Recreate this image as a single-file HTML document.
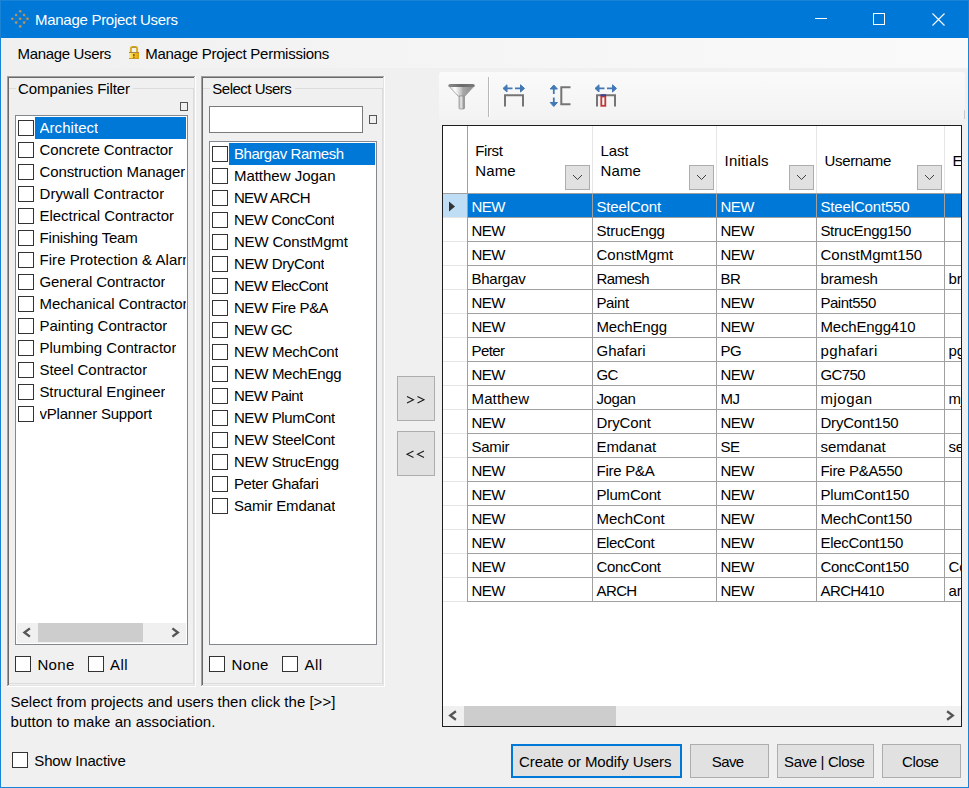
<!DOCTYPE html><html><head><meta charset="utf-8"><title>Manage Project Users</title><style>
*{box-sizing:border-box;margin:0;padding:0}
html,body{width:969px;height:788px;overflow:hidden;background:#F0F0F0}
body{position:relative;font-family:"Liberation Sans",sans-serif;font-size:15px;color:#000}
.a{position:absolute}
.t{position:absolute;white-space:pre;line-height:20px}
.it{position:absolute;white-space:pre;line-height:22px;height:22px;overflow:hidden}
.clip{position:absolute;overflow:hidden}
svg{position:absolute;overflow:visible}
</style></head><body>
<div class="a" style="left:0px;top:0px;width:969px;height:38px;background:#0078D7;"></div>
<div class="a" style="left:0px;top:0px;width:969px;height:1px;background:#1883D7;"></div>
<div class="a" style="left:0px;top:0px;width:1px;height:788px;background:#1883D7;"></div>
<div class="a" style="left:968px;top:0px;width:1px;height:788px;background:#1883D7;"></div>
<div class="a" style="left:0px;top:787px;width:969px;height:1px;background:#1883D7;"></div>
<svg style="left:0;top:0" width="40" height="38"><g stroke="#A08050" stroke-width="0.5" opacity="0.45" fill="none"><path d="M12.3 18.8H27.6M20.2 11.2L27.6 18.8L20.2 26.4M16.1 15L20.2 18.8L16.1 22.6M24.1 15L27.6 18.8L24.1 22.6"/></g><circle cx="20.2" cy="11.2" r="1.3" fill="#B8935D"/><circle cx="16.1" cy="15.0" r="1.3" fill="#B8935D"/><circle cx="24.1" cy="15.0" r="1.3" fill="#B8935D"/><circle cx="12.3" cy="18.8" r="1.3" fill="#B8935D"/><circle cx="20.2" cy="18.8" r="1.3" fill="#B8935D"/><circle cx="27.6" cy="18.8" r="1.3" fill="#B8935D"/><circle cx="16.1" cy="22.6" r="1.3" fill="#B8935D"/><circle cx="24.1" cy="22.6" r="1.3" fill="#B8935D"/><circle cx="20.2" cy="26.4" r="1.3" fill="#B8935D"/></svg>
<div class="t" style="left:35.0px;top:10px;letter-spacing:-0.28px;color:#FFFFFF;">Manage Project Users</div>
<div class="a" style="left:815px;top:18px;width:12px;height:1px;background:#FFFFFF;"></div>
<div class="a" style="left:873px;top:13px;width:12px;height:12px;border:1px solid #FFFFFF;background:transparent;"></div>
<svg style="left:0;top:0" width="969" height="38"><path d="M932.5 13.5L944.5 25.5M944.5 13.5L932.5 25.5" stroke="#fff" stroke-width="1.1"/></svg>
<div class="a" style="left:1px;top:38px;width:967px;height:30px;background:linear-gradient(to right,#F0F0F0,#FAFAFA)"></div>
<div class="t" style="left:17.6px;top:44px;letter-spacing:-0.35px;">Manage Users</div>
<svg style="left:124px;top:42px" width="20" height="20">
<defs><linearGradient id="lk" x1="0" x2="1"><stop offset="0" stop-color="#FFF08A"/><stop offset="0.5" stop-color="#F2C42A"/><stop offset="1" stop-color="#E0A000"/></linearGradient></defs>
<path d="M6.9 10.2V6.6Q6.9 5 8.4 5H11.6Q13.1 5 13.1 6.6V10.2" fill="none" stroke="#D9AE22" stroke-width="2"/>
<path d="M8.2 5.3H11.8" stroke="#A88650" stroke-width="1"/>
<rect x="5" y="10" width="10" height="7" fill="url(#lk)"/>
<rect x="5" y="10" width="10" height="1" fill="#A88650"/>
<rect x="5" y="16" width="10" height="1" fill="#C89A30"/>
<rect x="9.2" y="12" width="1.3" height="2.2" fill="#5A4A20"/>
<rect x="9.2" y="14.8" width="1.3" height="1" fill="#5A4A20"/>
</svg>
<div class="t" style="left:145.2px;top:44px;letter-spacing:-0.27px;">Manage Project Permissions</div>
<div class="a" style="left:7px;top:76px;width:189px;height:1px;background:#A0A0A0;"></div>
<div class="a" style="left:7px;top:76px;width:1px;height:611px;background:#A0A0A0;"></div>
<div class="a" style="left:7px;top:686px;width:189px;height:1px;background:#FFFFFF;"></div>
<div class="a" style="left:195px;top:76px;width:1px;height:611px;background:#FFFFFF;"></div>
<div class="a" style="left:8px;top:77px;width:187px;height:1px;background:#696969;"></div>
<div class="a" style="left:8px;top:77px;width:1px;height:609px;background:#696969;"></div>
<div class="a" style="left:8px;top:685px;width:187px;height:1px;background:#E3E3E3;"></div>
<div class="a" style="left:194px;top:77px;width:1px;height:609px;background:#E3E3E3;"></div>
<div class="a" style="left:9px;top:88px;width:185px;height:1px;background:#DCDCDC;"></div>
<div class="a" style="left:193px;top:88px;width:1px;height:596px;background:#DCDCDC;"></div>
<div class="a" style="left:9px;top:683px;width:185px;height:1px;background:#DCDCDC;"></div>
<div class="a" style="left:16px;top:80px;width:117px;height:17px;background:#F0F0F0;"></div>
<div class="t" style="left:18.1px;top:79px;letter-spacing:-0.09px;">Companies Filter</div>
<div class="a" style="left:180px;top:102px;width:8px;height:9px;border:1px solid #555555;background:#F0F0F0;"></div>
<div class="a" style="left:15px;top:115px;width:173px;height:530px;border:1px solid #828790;background:#FFFFFF;"></div>
<div class="clip" style="left:16px;top:116px;width:170px;height:507px">
<div class="a" style="left:2px;top:4px;width:16px;height:16px;border:1px solid #333;background:#fff"></div>
<div class="a" style="left:19px;top:1px;width:151px;height:22px;background:#0078D7"></div>
<div class="it" style="left:23.5px;top:1px;color:#fff;letter-spacing:0.05px;">Architect</div>
<div class="a" style="left:2px;top:26px;width:16px;height:16px;border:1px solid #333;background:#fff"></div>
<div class="it" style="left:23.5px;top:23px;letter-spacing:-0.08px;">Concrete Contractor</div>
<div class="a" style="left:2px;top:48px;width:16px;height:16px;border:1px solid #333;background:#fff"></div>
<div class="it" style="left:23.5px;top:45px;letter-spacing:-0.10px;">Construction Manager</div>
<div class="a" style="left:2px;top:70px;width:16px;height:16px;border:1px solid #333;background:#fff"></div>
<div class="it" style="left:23.5px;top:67px;letter-spacing:0.08px;">Drywall Contractor</div>
<div class="a" style="left:2px;top:92px;width:16px;height:16px;border:1px solid #333;background:#fff"></div>
<div class="it" style="left:23.5px;top:89px;letter-spacing:-0.03px;">Electrical Contractor</div>
<div class="a" style="left:2px;top:114px;width:16px;height:16px;border:1px solid #333;background:#fff"></div>
<div class="it" style="left:23.5px;top:111px;letter-spacing:-0.18px;">Finishing Team</div>
<div class="a" style="left:2px;top:136px;width:16px;height:16px;border:1px solid #333;background:#fff"></div>
<div class="it" style="left:23.5px;top:133px;letter-spacing:0.05px;">Fire Protection &amp; Alarm</div>
<div class="a" style="left:2px;top:158px;width:16px;height:16px;border:1px solid #333;background:#fff"></div>
<div class="it" style="left:23.5px;top:155px;letter-spacing:-0.09px;">General Contractor</div>
<div class="a" style="left:2px;top:180px;width:16px;height:16px;border:1px solid #333;background:#fff"></div>
<div class="it" style="left:23.5px;top:177px;letter-spacing:-0.10px;">Mechanical Contractor</div>
<div class="a" style="left:2px;top:202px;width:16px;height:16px;border:1px solid #333;background:#fff"></div>
<div class="it" style="left:23.5px;top:199px;letter-spacing:-0.03px;">Painting Contractor</div>
<div class="a" style="left:2px;top:224px;width:16px;height:16px;border:1px solid #333;background:#fff"></div>
<div class="it" style="left:23.5px;top:221px;letter-spacing:0.01px;">Plumbing Contractor</div>
<div class="a" style="left:2px;top:246px;width:16px;height:16px;border:1px solid #333;background:#fff"></div>
<div class="it" style="left:23.5px;top:243px;letter-spacing:-0.05px;">Steel Contractor</div>
<div class="a" style="left:2px;top:268px;width:16px;height:16px;border:1px solid #333;background:#fff"></div>
<div class="it" style="left:23.5px;top:265px;letter-spacing:-0.14px;">Structural Engineer</div>
<div class="a" style="left:2px;top:290px;width:16px;height:16px;border:1px solid #333;background:#fff"></div>
<div class="it" style="left:23.5px;top:287px;letter-spacing:-0.22px;">vPlanner Support</div>
</div>
<div class="a" style="left:17px;top:623px;width:169px;height:20px;background:#F0F0F0;"></div>
<div class="a" style="left:38px;top:623px;width:105px;height:19px;background:#CDCDCD;"></div>
<svg style="left:0;top:0" width="200" height="700"><path d="M29.9 628.3L24.4 632.5L29.9 636.7M172.4 628.3L177.9 632.5L172.4 636.7" fill="none" stroke="#555555" stroke-width="2.3"/></svg>
<div class="a" style="left:15px;top:656px;width:16px;height:16px;border:1px solid #333333;background:#FFFFFF;"></div>
<div class="t" style="left:37.4px;top:655px;letter-spacing:0.33px;">None</div>
<div class="a" style="left:88px;top:656px;width:16px;height:16px;border:1px solid #333333;background:#FFFFFF;"></div>
<div class="t" style="left:110.0px;top:655px;letter-spacing:0.50px;">All</div>
<div class="a" style="left:201px;top:76px;width:184px;height:1px;background:#A0A0A0;"></div>
<div class="a" style="left:201px;top:76px;width:1px;height:611px;background:#A0A0A0;"></div>
<div class="a" style="left:201px;top:686px;width:184px;height:1px;background:#FFFFFF;"></div>
<div class="a" style="left:384px;top:76px;width:1px;height:611px;background:#FFFFFF;"></div>
<div class="a" style="left:202px;top:77px;width:182px;height:1px;background:#696969;"></div>
<div class="a" style="left:202px;top:77px;width:1px;height:609px;background:#696969;"></div>
<div class="a" style="left:202px;top:685px;width:182px;height:1px;background:#E3E3E3;"></div>
<div class="a" style="left:383px;top:77px;width:1px;height:609px;background:#E3E3E3;"></div>
<div class="a" style="left:203px;top:88px;width:180px;height:1px;background:#DCDCDC;"></div>
<div class="a" style="left:382px;top:88px;width:1px;height:596px;background:#DCDCDC;"></div>
<div class="a" style="left:203px;top:683px;width:180px;height:1px;background:#DCDCDC;"></div>
<div class="a" style="left:210px;top:80px;width:85px;height:17px;background:#F0F0F0;"></div>
<div class="t" style="left:212.3px;top:79px;letter-spacing:-0.50px;">Select Users</div>
<div class="a" style="left:209px;top:106px;width:154px;height:27px;border:1px solid #7A7A7A;background:#FFFFFF;"></div>
<div class="a" style="left:369px;top:115px;width:8px;height:9px;border:1px solid #555555;background:#F0F0F0;"></div>
<div class="a" style="left:209px;top:141px;width:168px;height:504px;border:1px solid #828790;background:#FFFFFF;"></div>
<div class="a" style="left:212px;top:146px;width:16px;height:16px;border:1px solid #333333;background:#FFFFFF;"></div>
<div class="a" style="left:229px;top:143px;width:146px;height:22px;background:#0078D7;"></div>
<div class="it" style="left:233.9px;top:143px;color:#fff;letter-spacing:-0.43px;">Bhargav Ramesh</div>
<div class="a" style="left:212px;top:168px;width:16px;height:16px;border:1px solid #333333;background:#FFFFFF;"></div>
<div class="it" style="left:233.9px;top:165px;letter-spacing:-0.01px;">Matthew Jogan</div>
<div class="a" style="left:212px;top:190px;width:16px;height:16px;border:1px solid #333333;background:#FFFFFF;"></div>
<div class="it" style="left:233.9px;top:187px;letter-spacing:-0.60px;">NEW ARCH</div>
<div class="a" style="left:212px;top:212px;width:16px;height:16px;border:1px solid #333333;background:#FFFFFF;"></div>
<div class="it" style="left:233.9px;top:209px;letter-spacing:-0.45px;">NEW ConcCont</div>
<div class="a" style="left:212px;top:234px;width:16px;height:16px;border:1px solid #333333;background:#FFFFFF;"></div>
<div class="it" style="left:233.9px;top:231px;letter-spacing:-0.16px;">NEW ConstMgmt</div>
<div class="a" style="left:212px;top:256px;width:16px;height:16px;border:1px solid #333333;background:#FFFFFF;"></div>
<div class="it" style="left:233.9px;top:253px;letter-spacing:-0.34px;">NEW DryCont</div>
<div class="a" style="left:212px;top:278px;width:16px;height:16px;border:1px solid #333333;background:#FFFFFF;"></div>
<div class="it" style="left:233.9px;top:275px;letter-spacing:-0.48px;">NEW ElecCont</div>
<div class="a" style="left:212px;top:300px;width:16px;height:16px;border:1px solid #333333;background:#FFFFFF;"></div>
<div class="it" style="left:233.9px;top:297px;letter-spacing:-0.39px;">NEW Fire P&amp;A</div>
<div class="a" style="left:212px;top:322px;width:16px;height:16px;border:1px solid #333333;background:#FFFFFF;"></div>
<div class="it" style="left:233.9px;top:319px;letter-spacing:-0.60px;">NEW GC</div>
<div class="a" style="left:212px;top:344px;width:16px;height:16px;border:1px solid #333333;background:#FFFFFF;"></div>
<div class="it" style="left:233.9px;top:341px;letter-spacing:-0.26px;">NEW MechCont</div>
<div class="a" style="left:212px;top:366px;width:16px;height:16px;border:1px solid #333333;background:#FFFFFF;"></div>
<div class="it" style="left:233.9px;top:363px;letter-spacing:-0.29px;">NEW MechEngg</div>
<div class="a" style="left:212px;top:388px;width:16px;height:16px;border:1px solid #333333;background:#FFFFFF;"></div>
<div class="it" style="left:233.9px;top:385px;letter-spacing:-0.49px;">NEW Paint</div>
<div class="a" style="left:212px;top:410px;width:16px;height:16px;border:1px solid #333333;background:#FFFFFF;"></div>
<div class="it" style="left:233.9px;top:407px;letter-spacing:-0.35px;">NEW PlumCont</div>
<div class="a" style="left:212px;top:432px;width:16px;height:16px;border:1px solid #333333;background:#FFFFFF;"></div>
<div class="it" style="left:233.9px;top:429px;letter-spacing:-0.33px;">NEW SteelCont</div>
<div class="a" style="left:212px;top:454px;width:16px;height:16px;border:1px solid #333333;background:#FFFFFF;"></div>
<div class="it" style="left:233.9px;top:451px;letter-spacing:-0.34px;">NEW StrucEngg</div>
<div class="a" style="left:212px;top:476px;width:16px;height:16px;border:1px solid #333333;background:#FFFFFF;"></div>
<div class="it" style="left:233.9px;top:473px;letter-spacing:-0.36px;">Peter Ghafari</div>
<div class="a" style="left:212px;top:498px;width:16px;height:16px;border:1px solid #333333;background:#FFFFFF;"></div>
<div class="it" style="left:233.9px;top:495px;letter-spacing:-0.16px;">Samir Emdanat</div>
<div class="a" style="left:209px;top:656px;width:16px;height:16px;border:1px solid #333333;background:#FFFFFF;"></div>
<div class="t" style="left:231.6px;top:655px;letter-spacing:0.33px;">None</div>
<div class="a" style="left:282px;top:656px;width:16px;height:16px;border:1px solid #333333;background:#FFFFFF;"></div>
<div class="t" style="left:304.5px;top:655px;letter-spacing:0.50px;">All</div>
<div class="a" style="left:397px;top:376px;width:38px;height:45px;border:1px solid #ADADAD;background:#E1E1E1;"></div>
<div class="a" style="left:397px;top:431px;width:38px;height:45px;border:1px solid #ADADAD;background:#E1E1E1;"></div>
<svg style="left:0;top:0" width="969" height="788"><path d="M407 396.5L413.5 399.8L407 403.1M417.5 396.5L424 399.8L417.5 403.1M413.5 451L407 454.3L413.5 457.6M424 451L417.5 454.3L424 457.6" fill="none" stroke="#1a1a1a" stroke-width="1.1"/></svg>
<div class="t" style="left:10.5px;top:692px;letter-spacing:0.01px;">Select from projects and users then click the [&gt;&gt;]</div>
<div class="t" style="left:10.5px;top:712px;letter-spacing:0.05px;">button to make an association.</div>
<div class="a" style="left:12px;top:752px;width:16px;height:16px;border:1px solid #333333;background:#FFFFFF;"></div>
<div class="t" style="left:34.3px;top:751px;letter-spacing:-0.16px;">Show Inactive</div>
<div class="a" style="left:511px;top:744px;width:171px;height:34px;border:2px solid #0078D7;background:#E1E1E1"></div>
<div class="t" style="left:519.0px;top:752px;letter-spacing:-0.08px;">Create or Modify Users</div>
<div class="a" style="left:690px;top:744px;width:79px;height:34px;border:1px solid #ADADAD;background:#E1E1E1;"></div>
<div class="t" style="left:711.8px;top:752px;letter-spacing:-0.60px;">Save</div>
<div class="a" style="left:777px;top:744px;width:97px;height:34px;border:1px solid #ADADAD;background:#E1E1E1;"></div>
<div class="t" style="left:784.0px;top:752px;letter-spacing:-0.36px;">Save | Close</div>
<div class="a" style="left:882px;top:744px;width:79px;height:34px;border:1px solid #ADADAD;background:#E1E1E1;"></div>
<div class="t" style="left:902.0px;top:752px;letter-spacing:-0.35px;">Close</div>
<div class="a" style="left:439px;top:72px;width:526px;height:48px;border-radius:3px;background:linear-gradient(#FAFAFA,#F3F3F3)"></div>
<div class="a" style="left:964px;top:110px;width:1px;height:9px;background:#C8C8C8;"></div>
<svg style="left:440px;top:76px" width="40" height="40">
<defs><linearGradient id="fg" x1="0" x2="1"><stop offset="0" stop-color="#D8D8D8"/><stop offset="0.25" stop-color="#FDFDFD"/><stop offset="0.5" stop-color="#C0C0C0"/><stop offset="0.55" stop-color="#A8A8A8"/><stop offset="1" stop-color="#8A8A8A"/></linearGradient>
<linearGradient id="sg" x1="0" x2="1"><stop offset="0" stop-color="#B8B8B8"/><stop offset="0.4" stop-color="#E8E8E8"/><stop offset="1" stop-color="#7A7A7A"/></linearGradient>
<linearGradient id="rg" x1="0" x2="1"><stop offset="0" stop-color="#8A8A8A"/><stop offset="0.5" stop-color="#6A6A6A"/><stop offset="1" stop-color="#7A7A7A"/></linearGradient></defs>
<path d="M8.8 10L34.2 10L24.8 20.2H18.2Z" fill="url(#fg)" stroke="#9A9A9A" stroke-width="0.8"/>
<rect x="8.4" y="8" width="26.3" height="3" rx="1.5" fill="url(#rg)"/>
<path d="M19 20H24.5V32Q24.5 33 23.5 33H20Q19 33 19 32Z" fill="url(#sg)" stroke="#8E8E8E" stroke-width="0.7"/>
</svg>
<div class="a" style="left:488px;top:77px;width:1px;height:40px;background:#B8B8B8;"></div>
<div class="a" style="left:489px;top:77px;width:1px;height:40px;background:#FFFFFF;"></div>
<svg style="left:0;top:0" width="969" height="130"><path d="M505.5 88.4H512.5M515.0 88.4H522.0" stroke="#4279B5" stroke-width="1.8"/><path d="M503.0 88.4L507.0 84.8L507.0 92.0Z" fill="#4279B5" stroke="#4279B5" stroke-width="1" stroke-linejoin="round"/><path d="M524.5 88.4L520.5 84.8L520.5 92.0Z" fill="#4279B5" stroke="#4279B5" stroke-width="1" stroke-linejoin="round"/><path d="M505 106.5V95.2H523V106.5" fill="none" stroke="#757575" stroke-width="2"/><path d="M553.8 88V94M553.8 97.4V103.5" stroke="#4279B5" stroke-width="1.8"/><path d="M553.8 85L557.4 89H550.2ZM553.8 106.5L557.4 102.5H550.2Z" fill="#4279B5" stroke="#4279B5" stroke-width="1" stroke-linejoin="round"/><path d="M570.5 87.2H561.3V104.3H570.5" fill="none" stroke="#757575" stroke-width="2"/><path d="M597.5 88.4H604.5M607.0 88.4H614.0" stroke="#4279B5" stroke-width="1.8"/><path d="M595.0 88.4L599.0 84.8L599.0 92.0Z" fill="#4279B5" stroke="#4279B5" stroke-width="1" stroke-linejoin="round"/><path d="M616.5 88.4L612.5 84.8L612.5 92.0Z" fill="#4279B5" stroke="#4279B5" stroke-width="1" stroke-linejoin="round"/><path d="M597 106.5V95.2H615V106.5" fill="none" stroke="#757575" stroke-width="2"/><rect x="601.3" y="96.5" width="4" height="9.3" fill="none" stroke="#C03838" stroke-width="1.8"/><rect x="600.5" y="94.2" width="5.6" height="2" fill="#40409A"/></svg>
<div class="a" style="left:442px;top:125px;width:520px;height:602px;border:1px solid #1E1E1E;background:#FFFFFF;"></div>
<div class="clip" style="left:443px;top:126px;width:518px;height:580px">
<div class="a" style="left:0px;top:0px;width:519px;height:67px;background:#FFFFFF"></div>
<div class="a" style="left:0px;top:67px;width:519px;height:1px;background:#A0A0A0"></div>
<div class="a" style="left:24px;top:0px;width:1px;height:68px;background:#A0A0A0"></div>
<div class="a" style="left:149px;top:0px;width:1px;height:67px;background:#E5E5E5"></div>
<div class="a" style="left:273px;top:0px;width:1px;height:67px;background:#E5E5E5"></div>
<div class="a" style="left:373px;top:0px;width:1px;height:67px;background:#E5E5E5"></div>
<div class="a" style="left:501px;top:0px;width:1px;height:67px;background:#E5E5E5"></div>
<div class="t" style="left:32.3px;top:15px;letter-spacing:-0.40px;">First</div>
<div class="t" style="left:32.3px;top:35px;letter-spacing:0.10px;">Name</div>
<div class="t" style="left:157.6px;top:15px;letter-spacing:-0.2px;">Last</div>
<div class="t" style="left:157.6px;top:35px;letter-spacing:0.10px;">Name</div>
<div class="t" style="left:281.5px;top:25px;letter-spacing:0.21px;">Initials</div>
<div class="t" style="left:381.5px;top:25px;letter-spacing:-0.34px;">Username</div>
<div class="t" style="left:509.5px;top:25px;letter-spacing:-0.2px;">Email</div>
<div class="a" style="left:122px;top:39px;width:25px;height:25px;background:#E1E1E1;border:1px solid #ADADAD"></div>
<svg style="left:122px;top:39px" width="25" height="25"><path d="M8 10L12.5 14.5L17 10" fill="none" stroke="#404040" stroke-width="1"/></svg>
<div class="a" style="left:246px;top:39px;width:25px;height:25px;background:#E1E1E1;border:1px solid #ADADAD"></div>
<svg style="left:246px;top:39px" width="25" height="25"><path d="M8 10L12.5 14.5L17 10" fill="none" stroke="#404040" stroke-width="1"/></svg>
<div class="a" style="left:346px;top:39px;width:25px;height:25px;background:#E1E1E1;border:1px solid #ADADAD"></div>
<svg style="left:346px;top:39px" width="25" height="25"><path d="M8 10L12.5 14.5L17 10" fill="none" stroke="#404040" stroke-width="1"/></svg>
<div class="a" style="left:474px;top:39px;width:25px;height:25px;background:#E1E1E1;border:1px solid #ADADAD"></div>
<svg style="left:474px;top:39px" width="25" height="25"><path d="M8 10L12.5 14.5L17 10" fill="none" stroke="#404040" stroke-width="1"/></svg>
<div class="a" style="left:0px;top:68px;width:24px;height:23px;background:#BFDDF5"></div>
<div class="a" style="left:25px;top:68px;width:494px;height:23px;background:#0078D7"></div>
<div class="a" style="left:0px;top:91px;width:24px;height:1px;background:#E5E5E5"></div>
<div class="a" style="left:24px;top:91px;width:495px;height:1px;background:#A0A0A0"></div>
<div class="a" style="left:24px;top:68px;width:1px;height:24px;background:#A0A0A0"></div>
<div class="a" style="left:149px;top:68px;width:1px;height:24px;background:#A0A0A0"></div>
<div class="a" style="left:273px;top:68px;width:1px;height:24px;background:#A0A0A0"></div>
<div class="a" style="left:373px;top:68px;width:1px;height:24px;background:#A0A0A0"></div>
<div class="a" style="left:501px;top:68px;width:1px;height:24px;background:#A0A0A0"></div>
<div class="t" style="left:28.5px;top:71px;letter-spacing:-0.60px;color:#FFFFFF;">NEW</div>
<div class="t" style="left:153.5px;top:71px;letter-spacing:-0.16px;color:#FFFFFF;">SteelCont</div>
<div class="t" style="left:277.5px;top:71px;letter-spacing:-0.60px;color:#FFFFFF;">NEW</div>
<div class="t" style="left:377.5px;top:71px;letter-spacing:-0.16px;color:#FFFFFF;">SteelCont550</div>
<div class="a" style="left:0px;top:115px;width:24px;height:1px;background:#E5E5E5"></div>
<div class="a" style="left:24px;top:115px;width:495px;height:1px;background:#A0A0A0"></div>
<div class="a" style="left:24px;top:92px;width:1px;height:24px;background:#A0A0A0"></div>
<div class="a" style="left:149px;top:92px;width:1px;height:24px;background:#A0A0A0"></div>
<div class="a" style="left:273px;top:92px;width:1px;height:24px;background:#A0A0A0"></div>
<div class="a" style="left:373px;top:92px;width:1px;height:24px;background:#A0A0A0"></div>
<div class="a" style="left:501px;top:92px;width:1px;height:24px;background:#A0A0A0"></div>
<div class="t" style="left:28.5px;top:95px;letter-spacing:-0.60px;">NEW</div>
<div class="t" style="left:153.5px;top:95px;letter-spacing:-0.21px;">StrucEngg</div>
<div class="t" style="left:277.5px;top:95px;letter-spacing:-0.60px;">NEW</div>
<div class="t" style="left:377.5px;top:95px;letter-spacing:-0.38px;">StrucEngg150</div>
<div class="a" style="left:0px;top:139px;width:24px;height:1px;background:#E5E5E5"></div>
<div class="a" style="left:24px;top:139px;width:495px;height:1px;background:#A0A0A0"></div>
<div class="a" style="left:24px;top:116px;width:1px;height:24px;background:#A0A0A0"></div>
<div class="a" style="left:149px;top:116px;width:1px;height:24px;background:#A0A0A0"></div>
<div class="a" style="left:273px;top:116px;width:1px;height:24px;background:#A0A0A0"></div>
<div class="a" style="left:373px;top:116px;width:1px;height:24px;background:#A0A0A0"></div>
<div class="a" style="left:501px;top:116px;width:1px;height:24px;background:#A0A0A0"></div>
<div class="t" style="left:28.5px;top:119px;letter-spacing:-0.60px;">NEW</div>
<div class="t" style="left:153.5px;top:119px;letter-spacing:0.01px;">ConstMgmt</div>
<div class="t" style="left:277.5px;top:119px;letter-spacing:-0.60px;">NEW</div>
<div class="t" style="left:377.5px;top:119px;letter-spacing:0.00px;">ConstMgmt150</div>
<div class="a" style="left:0px;top:163px;width:24px;height:1px;background:#E5E5E5"></div>
<div class="a" style="left:24px;top:163px;width:495px;height:1px;background:#A0A0A0"></div>
<div class="a" style="left:24px;top:140px;width:1px;height:24px;background:#A0A0A0"></div>
<div class="a" style="left:149px;top:140px;width:1px;height:24px;background:#A0A0A0"></div>
<div class="a" style="left:273px;top:140px;width:1px;height:24px;background:#A0A0A0"></div>
<div class="a" style="left:373px;top:140px;width:1px;height:24px;background:#A0A0A0"></div>
<div class="a" style="left:501px;top:140px;width:1px;height:24px;background:#A0A0A0"></div>
<div class="t" style="left:28.5px;top:143px;letter-spacing:-0.27px;">Bhargav</div>
<div class="t" style="left:153.5px;top:143px;letter-spacing:-0.54px;">Ramesh</div>
<div class="t" style="left:277.5px;top:143px;letter-spacing:-0.60px;">BR</div>
<div class="t" style="left:377.5px;top:143px;letter-spacing:-0.17px;">bramesh</div>
<div class="t" style="left:505.5px;top:143px;letter-spacing:-0.2px;">bramesh@</div>
<div class="a" style="left:0px;top:187px;width:24px;height:1px;background:#E5E5E5"></div>
<div class="a" style="left:24px;top:187px;width:495px;height:1px;background:#A0A0A0"></div>
<div class="a" style="left:24px;top:164px;width:1px;height:24px;background:#A0A0A0"></div>
<div class="a" style="left:149px;top:164px;width:1px;height:24px;background:#A0A0A0"></div>
<div class="a" style="left:273px;top:164px;width:1px;height:24px;background:#A0A0A0"></div>
<div class="a" style="left:373px;top:164px;width:1px;height:24px;background:#A0A0A0"></div>
<div class="a" style="left:501px;top:164px;width:1px;height:24px;background:#A0A0A0"></div>
<div class="t" style="left:28.5px;top:167px;letter-spacing:-0.60px;">NEW</div>
<div class="t" style="left:153.5px;top:167px;letter-spacing:-0.40px;">Paint</div>
<div class="t" style="left:277.5px;top:167px;letter-spacing:-0.60px;">NEW</div>
<div class="t" style="left:377.5px;top:167px;letter-spacing:-0.49px;">Paint550</div>
<div class="a" style="left:0px;top:211px;width:24px;height:1px;background:#E5E5E5"></div>
<div class="a" style="left:24px;top:211px;width:495px;height:1px;background:#A0A0A0"></div>
<div class="a" style="left:24px;top:188px;width:1px;height:24px;background:#A0A0A0"></div>
<div class="a" style="left:149px;top:188px;width:1px;height:24px;background:#A0A0A0"></div>
<div class="a" style="left:273px;top:188px;width:1px;height:24px;background:#A0A0A0"></div>
<div class="a" style="left:373px;top:188px;width:1px;height:24px;background:#A0A0A0"></div>
<div class="a" style="left:501px;top:188px;width:1px;height:24px;background:#A0A0A0"></div>
<div class="t" style="left:28.5px;top:191px;letter-spacing:-0.60px;">NEW</div>
<div class="t" style="left:153.5px;top:191px;letter-spacing:-0.17px;">MechEngg</div>
<div class="t" style="left:277.5px;top:191px;letter-spacing:-0.60px;">NEW</div>
<div class="t" style="left:377.5px;top:191px;letter-spacing:-0.17px;">MechEngg410</div>
<div class="a" style="left:0px;top:235px;width:24px;height:1px;background:#E5E5E5"></div>
<div class="a" style="left:24px;top:235px;width:495px;height:1px;background:#A0A0A0"></div>
<div class="a" style="left:24px;top:212px;width:1px;height:24px;background:#A0A0A0"></div>
<div class="a" style="left:149px;top:212px;width:1px;height:24px;background:#A0A0A0"></div>
<div class="a" style="left:273px;top:212px;width:1px;height:24px;background:#A0A0A0"></div>
<div class="a" style="left:373px;top:212px;width:1px;height:24px;background:#A0A0A0"></div>
<div class="a" style="left:501px;top:212px;width:1px;height:24px;background:#A0A0A0"></div>
<div class="t" style="left:28.5px;top:215px;letter-spacing:-0.60px;">Peter</div>
<div class="t" style="left:153.5px;top:215px;letter-spacing:-0.02px;">Ghafari</div>
<div class="t" style="left:277.5px;top:215px;letter-spacing:-0.60px;">PG</div>
<div class="t" style="left:377.5px;top:215px;letter-spacing:0.37px;">pghafari</div>
<div class="t" style="left:505.5px;top:215px;letter-spacing:-0.2px;">pghafari@</div>
<div class="a" style="left:0px;top:259px;width:24px;height:1px;background:#E5E5E5"></div>
<div class="a" style="left:24px;top:259px;width:495px;height:1px;background:#A0A0A0"></div>
<div class="a" style="left:24px;top:236px;width:1px;height:24px;background:#A0A0A0"></div>
<div class="a" style="left:149px;top:236px;width:1px;height:24px;background:#A0A0A0"></div>
<div class="a" style="left:273px;top:236px;width:1px;height:24px;background:#A0A0A0"></div>
<div class="a" style="left:373px;top:236px;width:1px;height:24px;background:#A0A0A0"></div>
<div class="a" style="left:501px;top:236px;width:1px;height:24px;background:#A0A0A0"></div>
<div class="t" style="left:28.5px;top:239px;letter-spacing:-0.60px;">NEW</div>
<div class="t" style="left:153.5px;top:239px;letter-spacing:-0.60px;">GC</div>
<div class="t" style="left:277.5px;top:239px;letter-spacing:-0.60px;">NEW</div>
<div class="t" style="left:377.5px;top:239px;letter-spacing:-0.60px;">GC750</div>
<div class="a" style="left:0px;top:283px;width:24px;height:1px;background:#E5E5E5"></div>
<div class="a" style="left:24px;top:283px;width:495px;height:1px;background:#A0A0A0"></div>
<div class="a" style="left:24px;top:260px;width:1px;height:24px;background:#A0A0A0"></div>
<div class="a" style="left:149px;top:260px;width:1px;height:24px;background:#A0A0A0"></div>
<div class="a" style="left:273px;top:260px;width:1px;height:24px;background:#A0A0A0"></div>
<div class="a" style="left:373px;top:260px;width:1px;height:24px;background:#A0A0A0"></div>
<div class="a" style="left:501px;top:260px;width:1px;height:24px;background:#A0A0A0"></div>
<div class="t" style="left:28.5px;top:263px;letter-spacing:0.13px;">Matthew</div>
<div class="t" style="left:153.5px;top:263px;letter-spacing:-0.40px;">Jogan</div>
<div class="t" style="left:277.5px;top:263px;letter-spacing:-0.60px;">MJ</div>
<div class="t" style="left:377.5px;top:263px;letter-spacing:0.50px;">mjogan</div>
<div class="t" style="left:505.5px;top:263px;letter-spacing:-0.2px;">mjogan@</div>
<div class="a" style="left:0px;top:307px;width:24px;height:1px;background:#E5E5E5"></div>
<div class="a" style="left:24px;top:307px;width:495px;height:1px;background:#A0A0A0"></div>
<div class="a" style="left:24px;top:284px;width:1px;height:24px;background:#A0A0A0"></div>
<div class="a" style="left:149px;top:284px;width:1px;height:24px;background:#A0A0A0"></div>
<div class="a" style="left:273px;top:284px;width:1px;height:24px;background:#A0A0A0"></div>
<div class="a" style="left:373px;top:284px;width:1px;height:24px;background:#A0A0A0"></div>
<div class="a" style="left:501px;top:284px;width:1px;height:24px;background:#A0A0A0"></div>
<div class="t" style="left:28.5px;top:287px;letter-spacing:-0.60px;">NEW</div>
<div class="t" style="left:153.5px;top:287px;letter-spacing:-0.10px;">DryCont</div>
<div class="t" style="left:277.5px;top:287px;letter-spacing:-0.60px;">NEW</div>
<div class="t" style="left:377.5px;top:287px;letter-spacing:-0.21px;">DryCont150</div>
<div class="a" style="left:0px;top:331px;width:24px;height:1px;background:#E5E5E5"></div>
<div class="a" style="left:24px;top:331px;width:495px;height:1px;background:#A0A0A0"></div>
<div class="a" style="left:24px;top:308px;width:1px;height:24px;background:#A0A0A0"></div>
<div class="a" style="left:149px;top:308px;width:1px;height:24px;background:#A0A0A0"></div>
<div class="a" style="left:273px;top:308px;width:1px;height:24px;background:#A0A0A0"></div>
<div class="a" style="left:373px;top:308px;width:1px;height:24px;background:#A0A0A0"></div>
<div class="a" style="left:501px;top:308px;width:1px;height:24px;background:#A0A0A0"></div>
<div class="t" style="left:28.5px;top:311px;letter-spacing:-0.32px;">Samir</div>
<div class="t" style="left:153.5px;top:311px;letter-spacing:-0.08px;">Emdanat</div>
<div class="t" style="left:277.5px;top:311px;letter-spacing:-0.60px;">SE</div>
<div class="t" style="left:377.5px;top:311px;letter-spacing:-0.10px;">semdanat</div>
<div class="t" style="left:505.5px;top:311px;letter-spacing:-0.2px;">semdanat@</div>
<div class="a" style="left:0px;top:355px;width:24px;height:1px;background:#E5E5E5"></div>
<div class="a" style="left:24px;top:355px;width:495px;height:1px;background:#A0A0A0"></div>
<div class="a" style="left:24px;top:332px;width:1px;height:24px;background:#A0A0A0"></div>
<div class="a" style="left:149px;top:332px;width:1px;height:24px;background:#A0A0A0"></div>
<div class="a" style="left:273px;top:332px;width:1px;height:24px;background:#A0A0A0"></div>
<div class="a" style="left:373px;top:332px;width:1px;height:24px;background:#A0A0A0"></div>
<div class="a" style="left:501px;top:332px;width:1px;height:24px;background:#A0A0A0"></div>
<div class="t" style="left:28.5px;top:335px;letter-spacing:-0.60px;">NEW</div>
<div class="t" style="left:153.5px;top:335px;letter-spacing:-0.26px;">Fire P&amp;A</div>
<div class="t" style="left:277.5px;top:335px;letter-spacing:-0.60px;">NEW</div>
<div class="t" style="left:377.5px;top:335px;letter-spacing:-0.30px;">Fire P&amp;A550</div>
<div class="a" style="left:0px;top:379px;width:24px;height:1px;background:#E5E5E5"></div>
<div class="a" style="left:24px;top:379px;width:495px;height:1px;background:#A0A0A0"></div>
<div class="a" style="left:24px;top:356px;width:1px;height:24px;background:#A0A0A0"></div>
<div class="a" style="left:149px;top:356px;width:1px;height:24px;background:#A0A0A0"></div>
<div class="a" style="left:273px;top:356px;width:1px;height:24px;background:#A0A0A0"></div>
<div class="a" style="left:373px;top:356px;width:1px;height:24px;background:#A0A0A0"></div>
<div class="a" style="left:501px;top:356px;width:1px;height:24px;background:#A0A0A0"></div>
<div class="t" style="left:28.5px;top:359px;letter-spacing:-0.60px;">NEW</div>
<div class="t" style="left:153.5px;top:359px;letter-spacing:-0.19px;">PlumCont</div>
<div class="t" style="left:277.5px;top:359px;letter-spacing:-0.60px;">NEW</div>
<div class="t" style="left:377.5px;top:359px;letter-spacing:-0.21px;">PlumCont150</div>
<div class="a" style="left:0px;top:403px;width:24px;height:1px;background:#E5E5E5"></div>
<div class="a" style="left:24px;top:403px;width:495px;height:1px;background:#A0A0A0"></div>
<div class="a" style="left:24px;top:380px;width:1px;height:24px;background:#A0A0A0"></div>
<div class="a" style="left:149px;top:380px;width:1px;height:24px;background:#A0A0A0"></div>
<div class="a" style="left:273px;top:380px;width:1px;height:24px;background:#A0A0A0"></div>
<div class="a" style="left:373px;top:380px;width:1px;height:24px;background:#A0A0A0"></div>
<div class="a" style="left:501px;top:380px;width:1px;height:24px;background:#A0A0A0"></div>
<div class="t" style="left:28.5px;top:383px;letter-spacing:-0.60px;">NEW</div>
<div class="t" style="left:153.5px;top:383px;letter-spacing:-0.03px;">MechCont</div>
<div class="t" style="left:277.5px;top:383px;letter-spacing:-0.60px;">NEW</div>
<div class="t" style="left:377.5px;top:383px;letter-spacing:-0.18px;">MechCont150</div>
<div class="a" style="left:0px;top:427px;width:24px;height:1px;background:#E5E5E5"></div>
<div class="a" style="left:24px;top:427px;width:495px;height:1px;background:#A0A0A0"></div>
<div class="a" style="left:24px;top:404px;width:1px;height:24px;background:#A0A0A0"></div>
<div class="a" style="left:149px;top:404px;width:1px;height:24px;background:#A0A0A0"></div>
<div class="a" style="left:273px;top:404px;width:1px;height:24px;background:#A0A0A0"></div>
<div class="a" style="left:373px;top:404px;width:1px;height:24px;background:#A0A0A0"></div>
<div class="a" style="left:501px;top:404px;width:1px;height:24px;background:#A0A0A0"></div>
<div class="t" style="left:28.5px;top:407px;letter-spacing:-0.60px;">NEW</div>
<div class="t" style="left:153.5px;top:407px;letter-spacing:-0.40px;">ElecCont</div>
<div class="t" style="left:277.5px;top:407px;letter-spacing:-0.60px;">NEW</div>
<div class="t" style="left:377.5px;top:407px;letter-spacing:-0.30px;">ElecCont150</div>
<div class="a" style="left:0px;top:451px;width:24px;height:1px;background:#E5E5E5"></div>
<div class="a" style="left:24px;top:451px;width:495px;height:1px;background:#A0A0A0"></div>
<div class="a" style="left:24px;top:428px;width:1px;height:24px;background:#A0A0A0"></div>
<div class="a" style="left:149px;top:428px;width:1px;height:24px;background:#A0A0A0"></div>
<div class="a" style="left:273px;top:428px;width:1px;height:24px;background:#A0A0A0"></div>
<div class="a" style="left:373px;top:428px;width:1px;height:24px;background:#A0A0A0"></div>
<div class="a" style="left:501px;top:428px;width:1px;height:24px;background:#A0A0A0"></div>
<div class="t" style="left:28.5px;top:431px;letter-spacing:-0.60px;">NEW</div>
<div class="t" style="left:153.5px;top:431px;letter-spacing:-0.33px;">ConcCont</div>
<div class="t" style="left:277.5px;top:431px;letter-spacing:-0.60px;">NEW</div>
<div class="t" style="left:377.5px;top:431px;letter-spacing:-0.31px;">ConcCont150</div>
<div class="t" style="left:505.5px;top:431px;letter-spacing:-0.2px;">ConcCont@</div>
<div class="a" style="left:0px;top:475px;width:24px;height:1px;background:#E5E5E5"></div>
<div class="a" style="left:24px;top:475px;width:495px;height:1px;background:#A0A0A0"></div>
<div class="a" style="left:24px;top:452px;width:1px;height:24px;background:#A0A0A0"></div>
<div class="a" style="left:149px;top:452px;width:1px;height:24px;background:#A0A0A0"></div>
<div class="a" style="left:273px;top:452px;width:1px;height:24px;background:#A0A0A0"></div>
<div class="a" style="left:373px;top:452px;width:1px;height:24px;background:#A0A0A0"></div>
<div class="a" style="left:501px;top:452px;width:1px;height:24px;background:#A0A0A0"></div>
<div class="t" style="left:28.5px;top:455px;letter-spacing:-0.60px;">NEW</div>
<div class="t" style="left:153.5px;top:455px;letter-spacing:-0.60px;">ARCH</div>
<div class="t" style="left:277.5px;top:455px;letter-spacing:-0.60px;">NEW</div>
<div class="t" style="left:377.5px;top:455px;letter-spacing:-0.60px;">ARCH410</div>
<div class="t" style="left:505.5px;top:455px;letter-spacing:-0.2px;">arch@</div>
<svg style="left:0px;top:68px" width="20" height="20"><path d="M6 7.5L12 12.5L6 17.5Z" fill="#333"/></svg>
</div>
<div class="a" style="left:443px;top:706px;width:518px;height:20px;background:#F0F0F0;"></div>
<div class="a" style="left:464px;top:706px;width:152px;height:20px;background:#CDCDCD;"></div>
<svg style="left:0;top:0" width="969" height="788"><path d="M455.9 711.3L450.2 715.5L455.9 719.7M947.1 711.3L952.8 715.5L947.1 719.7" fill="none" stroke="#555555" stroke-width="2.3"/></svg>
</body></html>
